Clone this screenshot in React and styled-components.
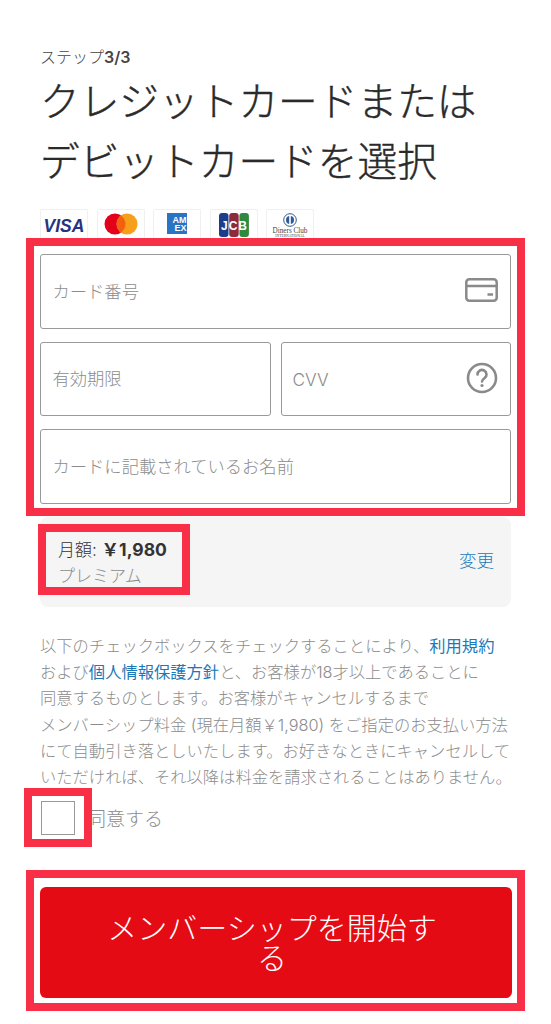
import React from 'react'
import styled, { createGlobalStyle } from 'styled-components';

const GlobalStyle = createGlobalStyle`
    body {
        margin: 0;
        background: #fff;
        font-family: Inter, "Noto Sans CJK JP", sans-serif;
    }
`;

const VisaLogo = () => (
    <svg width="44" height="25" viewBox="0 0 44 25">
        <text x="22" y="19" textAnchor="middle" fontFamily="Liberation Sans" fontSize="17.5" fontWeight="700" fontStyle="italic" fill="#26337f">VISA</text>
    </svg>
);

const MasterLogo = () => (
    <svg width="34" height="22" viewBox="0 0 34 22">
        <circle cx="11" cy="11" r="10.5" fill="#e3001b" />
        <circle cx="23" cy="11" r="10.5" fill="#f79f1a" />
        <path d="M17 2.4a10.5 10.5 0 0 1 0 17.2a10.5 10.5 0 0 1 0-17.2z" fill="#f2610f" />
    </svg>
);

const AmexLogo = () => (
    <svg width="20" height="21" viewBox="0 0 20 21">
        <rect width="20" height="21" fill="#2a74c4" />
        <text x="19.5" y="10" textAnchor="end" fontFamily="Liberation Sans" fontSize="9" fontWeight="700" fill="#fff">AM</text>
        <text x="19.5" y="18" textAnchor="end" fontFamily="Liberation Sans" fontSize="9" fontWeight="700" fill="#fff">EX</text>
    </svg>
);

const JcbLogo = () => (
    <svg width="30" height="24" viewBox="0 0 30 24">
        <rect x="0" y="0" width="9.5" height="24" rx="3" fill="#1c3d8c" />
        <rect x="10.2" y="0" width="9.5" height="24" rx="3" fill="#8c2b3c" />
        <rect x="20.4" y="0" width="9.5" height="24" rx="3" fill="#2d8a3e" />
        <text x="15.5" y="17" textAnchor="middle" fontFamily="Liberation Sans" fontSize="12" fontWeight="700" fill="#fff" letterSpacing="1">JCB</text>
    </svg>
);

const DinersLogo = () => (
    <svg width="36" height="25" viewBox="0 0 36 25">
        <circle cx="18" cy="7" r="6.3" fill="#fff" stroke="#2f5a94" strokeWidth="1" />
        <circle cx="18" cy="7" r="4" fill="#2f5a94" />
        <rect x="17.2" y="2.6" width="1.6" height="8.8" fill="#fff" />
        <text x="18" y="19.5" textAnchor="middle" fontFamily="Liberation Serif" fontSize="7.2" fill="#444">Diners Club</text>
        <text x="18" y="23.6" textAnchor="middle" fontFamily="Liberation Serif" fontSize="3.7" fill="#444">INTERNATIONAL</text>
    </svg>
);

const CardIcon = () => (
    <svg width="33" height="24" viewBox="0 0 33 24" fill="none" stroke="#8a8a8a" strokeWidth="2.5">
        <rect x="1.3" y="1.3" width="30.4" height="21.4" rx="3" />
        <path d="M1.3 8h30.4" />
        <path d="M22.5 16.5h5.5" />
    </svg>
);

const HelpIcon = () => (
    <svg width="32" height="32" viewBox="0 0 32 32" fill="none" stroke="#8a8a8a" strokeWidth="2.6">
        <circle cx="16" cy="16" r="14" />
        <path d="M11.5 12.5a4.5 4.5 0 1 1 7 3.7c-1.6 1.1-2.5 1.7-2.5 3.3" strokeLinecap="round" />
        <circle cx="16" cy="23.5" r="1.6" fill="#8a8a8a" stroke="none" />
    </svg>
);

const logos = [<VisaLogo />, <MasterLogo />, <AmexLogo />, <JcbLogo />, <DinersLogo />];

const App = () => {
    return (
        <Page>
            <GlobalStyle />
            <Step>ステップ<b>3/3</b></Step>
            <Title>クレジットカードまたは<br />デビットカードを選択</Title>

            <LogoRow>
                {logos.map((logo, i) => (
                    <LogoTile key={i}>{logo}</LogoTile>
                ))}
            </LogoRow>

            <FieldsHighlight>
                <Field>カード番号<CardIcon /></Field>
                <TwoColumns>
                    <Field>有効期限</Field>
                    <Field><CvvLabel>CVV</CvvLabel><HelpIcon /></Field>
                </TwoColumns>
                <Field>カードに記載されているお名前</Field>
            </FieldsHighlight>

            <PlanCard>
                <PlanHighlight>
                    <Price>月額: <b>&#xFFE5;1,980</b></Price>
                    <PlanName>プレミアム</PlanName>
                </PlanHighlight>
                <Link>変更</Link>
            </PlanCard>

            <Legal>
                以下のチェックボックスをチェックすることにより、<A>利用規約</A><br />
                および<A>個人情報保護方針</A>と、お客様が18才以上であることに<br />
                同意するものとします。お客様がキャンセルするまで<br />
                メンバーシップ料金 (現在月額&#xFFE5;1,980) をご指定のお支払い方法<br />
                にて自動引き落としいたします。お好きなときにキャンセルして<br />
                いただければ、それ以降は料金を請求されることはありません。
            </Legal>

            <AgreeRow>
                <CheckHighlight><CheckBox /></CheckHighlight>
                <AgreeLabel>同意する</AgreeLabel>
            </AgreeRow>

            <ButtonHighlight>
                <StartButton>メンバーシップを開始する</StartButton>
            </ButtonHighlight>
        </Page>
    )
}

export default App;

const Page = styled.div`
    width: 551px;
    height: 1024px;
    box-sizing: border-box;
    padding: 47px 40px 0;
    overflow: hidden;
`;

const Step = styled.div`
    font-size: 16px;
    line-height: 20px;
    color: #444;
    font-weight: 300;

    b {
        font-weight: 600;
    }
`;

const Title = styled.h1`
    margin: 5px 0 0;
    height: 118px;
    font-size: 39.7px;
    line-height: 60px;
    font-weight: 300;
    color: #2a2a2a;
    -webkit-text-stroke: 0.4px #2a2a2a;
    white-space: nowrap;
`;

const LogoRow = styled.div`
    display: flex;
    gap: 8.5px;
    margin-top: 19px;
`;

const LogoTile = styled.div`
    width: 48px;
    height: 29px;
    flex: none;
    box-sizing: border-box;
    border: 1px solid #f0f0f0;
    border-bottom: none;
    border-radius: 2px 2px 0 0;
    padding-top: 3px;
    display: flex;
    justify-content: center;
    align-items: flex-start;
`;

const FieldsHighlight = styled.div`
    margin: 0 -14px;
    border: 8px solid #f92f47;
    padding: 8px 6px 4.5px;
    display: flex;
    flex-direction: column;
    gap: 13px;
`;

const TwoColumns = styled.div`
    display: grid;
    grid-template-columns: 231px 230px;
    gap: 10px;
`;

const Field = styled.div`
    height: 74.5px;
    box-sizing: border-box;
    border: 1.5px solid #999;
    border-radius: 3px;
    padding: 0 12.5px 2px 11.5px;
    display: flex;
    align-items: center;
    justify-content: space-between;
    font-size: 17.3px;
    font-weight: 300;
    color: #8c8c8c;
`;

const CvvLabel = styled.span`
    padding-top: 4px;
    margin-left: -1px;
`;

const PlanCard = styled.div`
    margin-top: 1px;
    height: 90px;
    box-sizing: border-box;
    padding: 7px 17px 0 0;
    background: #f5f5f5;
    border-radius: 8px;
    display: flex;
    justify-content: space-between;
    align-items: flex-start;
`;

const PlanHighlight = styled.div`
    margin-left: -2px;
    width: 152px;
    height: 71px;
    box-sizing: border-box;
    border: 8px solid #f92f47;
    padding: 5px 0 0 12px;
`;

const Price = styled.div`
    font-size: 17px;
    line-height: 26px;
    color: #333;
    white-space: nowrap;
    font-weight: 300;

    b {
        font-size: 17.5px;
        font-weight: 700;
    }
`;

const PlanName = styled.div`
    font-size: 17px;
    line-height: 26px;
    font-weight: 300;
    color: #8c8c8c;
    white-space: nowrap;
`;

const Link = styled.a`
    margin-top: 24px;
    font-size: 17.5px;
    line-height: 26px;
    font-weight: 300;
    color: #1c78b8;
`;

const Legal = styled.p`
    margin: 26px 0 0;
    font-size: 16.3px;
    line-height: 26.2px;
    font-weight: 300;
    color: #8c8c8c;
    white-space: nowrap;
`;

const A = styled.span`
    color: #1c78b8;
    font-weight: 400;
`;

const AgreeRow = styled.div`
    margin: -2px 0 0 -16px;
    display: flex;
    align-items: center;
`;

const CheckHighlight = styled.div`
    position: relative;
    z-index: 1;
    width: 68px;
    height: 59px;
    box-sizing: border-box;
    border: 8px solid #f92f47;
    background: #fff;
    display: flex;
    align-items: center;
    justify-content: center;
`;

const CheckBox = styled.div`
    width: 34px;
    height: 34px;
    box-sizing: border-box;
    border: 1.5px solid #999;
`;

const AgreeLabel = styled.div`
    margin-left: -5px;
    font-size: 19px;
    font-weight: 300;
    color: #8c8c8c;
`;

const ButtonHighlight = styled.div`
    margin: 23px -14px 0;
    border: 8.5px solid #f92f47;
    padding: 8.5px 5.5px 5.5px;
`;

const StartButton = styled.button`
    display: block;
    width: 100%;
    height: 111px;
    padding: 2px 69px 0 62px;
    border: none;
    border-radius: 6px;
    background: #e50b14;
    color: #fff;
    font-family: inherit;
    font-size: 30px;
    font-weight: 300;
    line-height: 30px;
`;
